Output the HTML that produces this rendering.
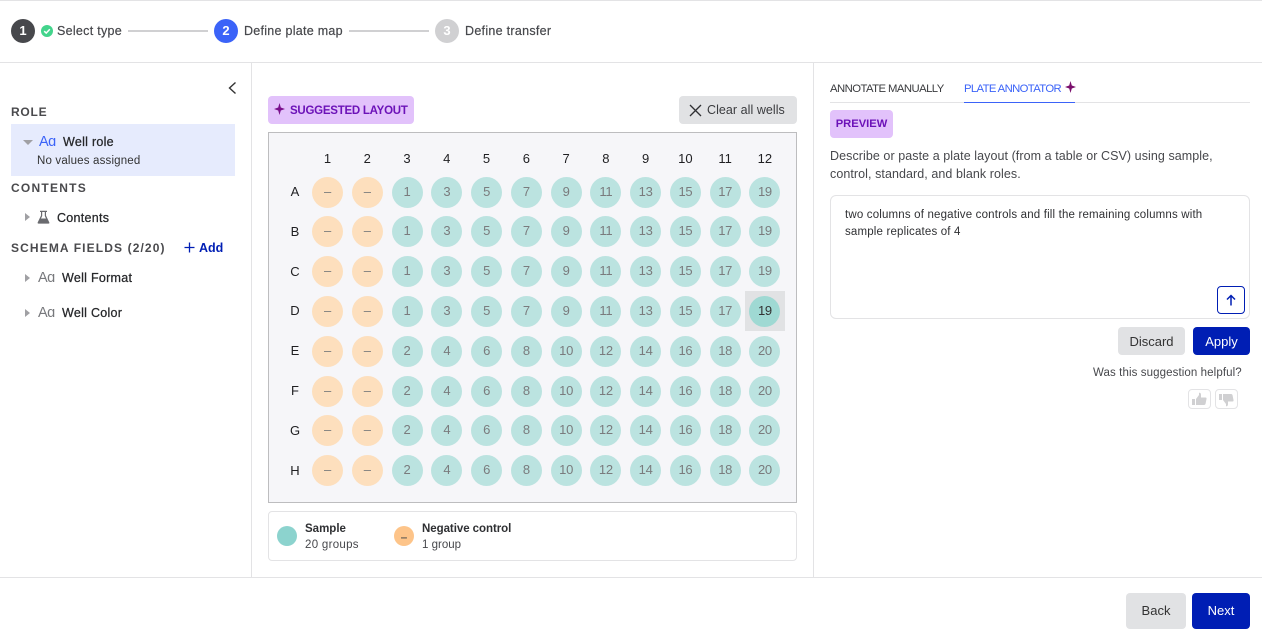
<!DOCTYPE html>
<html><head><meta charset="utf-8"><style>
*{box-sizing:border-box}
html,body{margin:0;padding:0;background:#fff;width:1262px;height:641px;overflow:hidden}
body{position:relative;font-family:"Liberation Sans",sans-serif;color:#2f3033;font-size:12px}
.a{position:absolute;white-space:nowrap}
.l{position:absolute;background:#e3e3e5}
.c{position:absolute;border-radius:50%;color:#fff;text-align:center;font-weight:bold;font-size:13px;width:24px;height:24px;line-height:24px;top:19px}
.line{position:absolute;height:2px;top:30px;width:80px;background:#d0d0d2}
.st{position:absolute;top:24px;font-size:12.5px;color:#47484c;letter-spacing:.29px;-webkit-text-stroke:.2px #47484c}
.h{position:absolute;left:11px;font-size:12px;font-weight:bold;letter-spacing:.75px;color:#4a4a4d}
.tri{position:absolute;width:0;height:0;border-top:4px solid transparent;border-bottom:4px solid transparent;border-left:5px solid #a0a0a4}
.ag{position:absolute;font-size:14.5px;color:#77787c;letter-spacing:-.5px}
.b{position:absolute;font-size:12.5px;color:#26272a;-webkit-text-stroke:.25px #26272a;white-space:nowrap;letter-spacing:.28px}
.btn{position:absolute;border-radius:4px;text-align:center;font-size:13px}
.gr{background:#e1e2e4;color:#333}
.bl{background:#001eb4;color:#fff}
.plate{position:absolute;left:268px;top:132px;width:529px;height:371px;background:#f6f6f9;border:1px solid #bdbdbf}
.grid{position:absolute;left:38.6px;top:6px;display:grid;grid-template-columns:repeat(12,39.77px);grid-template-rows:33.3px repeat(8,39.8px)}
.cl{text-align:center;font-size:13px;color:#1f1f22;line-height:40px;height:33px}
.w{position:relative;width:31px;height:31px;border-radius:50%;margin:4.4px 4.4px;text-align:center;line-height:30px;font-size:13px;color:#7a7b7d;letter-spacing:-.3px}
.s{background:#bbe3e0}
.n{background:#fddfbd}
.r{position:absolute;left:20px;width:12px;text-align:center;font-size:13px;color:#1f1f22}
</style></head><body>
<div class="l" style="left:0;top:0;width:1262px;height:1px"></div>
<div class="l" style="left:0;top:62px;width:1262px;height:1px"></div>
<div class="l" style="left:251px;top:63px;width:1px;height:514px"></div>
<div class="l" style="left:813px;top:63px;width:1px;height:514px"></div>
<div class="l" style="left:0;top:577px;width:1262px;height:1px"></div>

<div class="c" style="left:11px;background:#47484c">1</div>
<svg class="a" style="left:41px;top:25px" width="12" height="12" viewBox="0 0 12 12"><circle cx="6" cy="6" r="6" fill="#43d48c"/><path d="M3.2 6.2 5.2 8.1 8.8 4.2" fill="none" stroke="#fff" stroke-width="1.5"/></svg>
<div class="st a" style="left:57px">Select type</div>
<div class="line" style="left:128px"></div>
<div class="c" style="left:214px;background:#3b63f8">2</div>
<div class="st a" style="left:244px;letter-spacing:.27px">Define plate map</div>
<div class="line" style="left:349px"></div>
<div class="c" style="left:435px;background:#d0d0d2">3</div>
<div class="st a" style="left:465px">Define transfer</div>

<svg class="a" style="left:227px;top:81px" width="10" height="14" viewBox="0 0 10 14"><path d="M8.5 1.5 2.5 7 8.5 12.5" fill="none" stroke="#333" stroke-width="1.4"/></svg>
<div class="h a" style="top:105px">ROLE</div>
<div class="a" style="left:11px;top:124px;width:224px;height:52px;background:#e6ebfd"></div>
<div class="a" style="left:23px;top:140px;width:0;height:0;border-left:5px solid transparent;border-right:5px solid transparent;border-top:5px solid #a0a0a4"></div>
<div class="ag a" style="left:39px;top:134px;color:#3b63f8">Aɑ</div>
<div class="b" style="left:63px;top:135px">Well role</div>
<div class="a" style="left:37px;top:155px;font-size:11.5px;color:#333;letter-spacing:.17px">No values assigned</div>
<div class="h a" style="top:181px;letter-spacing:1.25px">CONTENTS</div>
<div class="tri" style="left:25px;top:213px"></div>
<svg class="a" style="left:37px;top:210px" width="13" height="14" viewBox="0 0 13 14"><path d="M3 .8H10V2H9V5.5L12.4 12.6Q12.6 13.6 11.5 13.6H1.5Q.4 13.6.6 12.6L4 5.5V2H3Z" fill="#6a6b6f"/><path d="M5.2 2V6L4 8.5H9L7.8 6V2Z" fill="#fff"/></svg>
<div class="b" style="left:57px;top:211px">Contents</div>
<div class="h a" style="top:241px;letter-spacing:1.12px">SCHEMA FIELDS (2/20)</div>
<svg class="a" style="left:184px;top:242px" width="11" height="11" viewBox="0 0 11 11"><path d="M5.5.5V10.5M.5 5.5H10.5" stroke="#001eb4" stroke-width="1.3"/></svg>
<div class="a" style="left:199px;top:241px;font-size:12.5px;font-weight:bold;color:#001eb4">Add</div>
<div class="tri" style="left:25px;top:274px"></div>
<div class="ag" style="left:38px;top:270px">Aɑ</div>
<div class="b" style="left:62px;top:271px">Well Format</div>
<div class="tri" style="left:25px;top:309px"></div>
<div class="ag" style="left:38px;top:305px">Aɑ</div>
<div class="b" style="left:62px;top:306px">Well Color</div>

<div class="a" style="left:268px;top:96px;width:146px;height:28px;background:#e2c2fb;border-radius:4px"></div>
<svg class="a" style="left:274px;top:103px" width="11" height="12" viewBox="0 0 11 12"><path d="M5.5 0 6.8 4.5 11 6 6.8 7.5 5.5 12 4.2 7.5 0 6 4.2 4.5Z" fill="#7a0f8c"/></svg>
<div class="a" style="left:290px;top:104px;font-size:11.5px;line-height:15px;font-weight:bold;color:#6c12b8;letter-spacing:-.25px">SUGGESTED LAYOUT</div>
<div class="btn gr" style="left:679px;top:96px;width:118px;height:28px"></div>
<svg class="a" style="left:689px;top:104px" width="13" height="13" viewBox="0 0 13 13"><path d="M1 1 12 12M12 1 1 12" stroke="#2f3033" stroke-width="1.3"/></svg>
<div class="a" style="left:707px;top:103px;font-size:12.5px;color:#3a3b3e;letter-spacing:.05px">Clear all wells</div>

<div class="plate">
<div class="a" style="left:476px;top:158px;width:40px;height:40px;background:#e1e2e4"></div>
<div class="r" style="top:51px">A</div><div class="r" style="top:91px">B</div><div class="r" style="top:131px">C</div><div class="r" style="top:170px">D</div><div class="r" style="top:210px">E</div><div class="r" style="top:250px">F</div><div class="r" style="top:290px">G</div><div class="r" style="top:330px">H</div>
<div class="grid">
<div class="cl">1</div><div class="cl">2</div><div class="cl">3</div><div class="cl">4</div><div class="cl">5</div><div class="cl">6</div><div class="cl">7</div><div class="cl">8</div><div class="cl">9</div><div class="cl">10</div><div class="cl">11</div><div class="cl">12</div>
<div class="w n">–</div><div class="w n">–</div><div class="w s">1</div><div class="w s">3</div><div class="w s">5</div><div class="w s">7</div><div class="w s">9</div><div class="w s">11</div><div class="w s">13</div><div class="w s">15</div><div class="w s">17</div><div class="w s">19</div>
<div class="w n">–</div><div class="w n">–</div><div class="w s">1</div><div class="w s">3</div><div class="w s">5</div><div class="w s">7</div><div class="w s">9</div><div class="w s">11</div><div class="w s">13</div><div class="w s">15</div><div class="w s">17</div><div class="w s">19</div>
<div class="w n">–</div><div class="w n">–</div><div class="w s">1</div><div class="w s">3</div><div class="w s">5</div><div class="w s">7</div><div class="w s">9</div><div class="w s">11</div><div class="w s">13</div><div class="w s">15</div><div class="w s">17</div><div class="w s">19</div>
<div class="w n">–</div><div class="w n">–</div><div class="w s">1</div><div class="w s">3</div><div class="w s">5</div><div class="w s">7</div><div class="w s">9</div><div class="w s">11</div><div class="w s">13</div><div class="w s">15</div><div class="w s">17</div><div class="w s" style="background:#9fd9d3;color:#333">19</div>
<div class="w n">–</div><div class="w n">–</div><div class="w s">2</div><div class="w s">4</div><div class="w s">6</div><div class="w s">8</div><div class="w s">10</div><div class="w s">12</div><div class="w s">14</div><div class="w s">16</div><div class="w s">18</div><div class="w s">20</div>
<div class="w n">–</div><div class="w n">–</div><div class="w s">2</div><div class="w s">4</div><div class="w s">6</div><div class="w s">8</div><div class="w s">10</div><div class="w s">12</div><div class="w s">14</div><div class="w s">16</div><div class="w s">18</div><div class="w s">20</div>
<div class="w n">–</div><div class="w n">–</div><div class="w s">2</div><div class="w s">4</div><div class="w s">6</div><div class="w s">8</div><div class="w s">10</div><div class="w s">12</div><div class="w s">14</div><div class="w s">16</div><div class="w s">18</div><div class="w s">20</div>
<div class="w n">–</div><div class="w n">–</div><div class="w s">2</div><div class="w s">4</div><div class="w s">6</div><div class="w s">8</div><div class="w s">10</div><div class="w s">12</div><div class="w s">14</div><div class="w s">16</div><div class="w s">18</div><div class="w s">20</div>
</div></div>

<div class="a" style="left:268px;top:511px;width:529px;height:50px;border:1px solid #e3e3e5;border-radius:4px"></div>
<div class="a" style="left:277px;top:526px;width:20px;height:20px;border-radius:50%;background:#8cd3ce"></div>
<div class="a" style="left:305px;top:523px;font-size:11.5px;font-weight:bold;color:#2f3033">Sample</div>
<div class="a" style="left:305px;top:539px;font-size:11.5px;color:#47484c;letter-spacing:.3px">20 groups</div>
<div class="a" style="left:394px;top:526px;width:20px;height:20px;border-radius:50%;background:#fdc489;color:#6d6458;text-align:center;line-height:22px;font-size:12px;font-weight:bold">–</div>
<div class="a" style="left:422px;top:523px;font-size:11.5px;font-weight:bold;color:#2f3033;letter-spacing:-.05px">Negative control</div>
<div class="a" style="left:422px;top:539px;font-size:11.5px;color:#47484c">1 group</div>

<div class="a" style="left:830px;top:83px;font-size:11.3px;color:#3a3b3e;letter-spacing:-.55px">ANNOTATE MANUALLY</div>
<div class="a" style="left:964px;top:83px;font-size:11.3px;color:#3b63f8;letter-spacing:-.63px">PLATE ANNOTATOR</div>
<svg class="a" style="left:1065px;top:81px" width="11" height="12" viewBox="0 0 11 12"><path d="M5.5 0 6.8 4.5 11 6 6.8 7.5 5.5 12 4.2 7.5 0 6 4.2 4.5Z" fill="#7a0f6c"/></svg>
<div class="l" style="left:830px;top:102px;width:420px;height:1px"></div>
<div class="a" style="left:964px;top:102px;width:111px;height:1px;background:#3b63f8"></div>
<div class="a" style="left:830px;top:110px;width:63px;height:28px;background:#e2c2fb;border-radius:4px;text-align:center;line-height:29px;font-size:11.2px;font-weight:bold;color:#6c12b8">PREVIEW</div>
<div class="a" style="left:830px;top:147px;font-size:12.5px;line-height:18px;color:#47484c;letter-spacing:.07px">Describe or paste a plate layout (from a table or CSV) using sample,<br>control, standard, and blank roles.</div>
<div class="a" style="left:830px;top:195px;width:420px;height:124px;border:1px solid #e3e3e5;border-radius:6px"></div>
<div class="a" style="left:845px;top:207px;font-size:11.5px;line-height:17px;color:#2f3033;letter-spacing:.17px">two columns of negative controls and fill the remaining columns with<br>sample replicates of 4</div>
<div class="a" style="left:1217px;top:286px;width:28px;height:28px;border:1px solid #001eb4;border-radius:4px"></div>
<svg class="a" style="left:1225px;top:294px" width="12" height="12" viewBox="0 0 12 12"><path d="M6 11.5V1.5M2 5.5 6 1.5 10 5.5" fill="none" stroke="#001eb4" stroke-width="1.5"/></svg>
<div class="btn gr" style="left:1118px;top:327px;width:67px;height:28px;line-height:29px">Discard</div>
<div class="btn bl" style="left:1193px;top:327px;width:57px;height:28px;line-height:29px">Apply</div>
<div class="a" style="left:1093px;top:367px;font-size:11.5px;color:#47484c;letter-spacing:.1px">Was this suggestion helpful?</div>
<div class="a" style="left:1188px;top:389px;width:23px;height:20px;border:1px solid #e3e3e5;border-radius:4px"></div>
<svg class="a" style="left:1192px;top:392px" width="15" height="14" viewBox="0 0 15 14"><path d="M0 7H3V13H0ZM4 7 7 3V.8Q9 .5 9 3V5.5H13.5Q14.8 5.5 14.5 7L13.5 12Q13.2 13 12 13H4Z" fill="#d0d0d2"/></svg>
<div class="a" style="left:1215px;top:389px;width:23px;height:20px;border:1px solid #e3e3e5;border-radius:4px"></div>
<svg class="a" style="left:1219px;top:393px" width="15" height="14" viewBox="0 0 15 14"><path d="M0 1H3V7H0ZM4 1H12Q13.2 1 13.5 2L14.5 7Q14.8 8.5 13.5 8.5H9V11Q9 13.5 7 13.2V11L4 7Z" fill="#d0d0d2"/></svg>

<div class="btn gr" style="left:1126px;top:593px;width:60px;height:36px;line-height:36px">Back</div>
<div class="btn bl" style="left:1192px;top:593px;width:58px;height:36px;line-height:36px">Next</div>
</body></html>
